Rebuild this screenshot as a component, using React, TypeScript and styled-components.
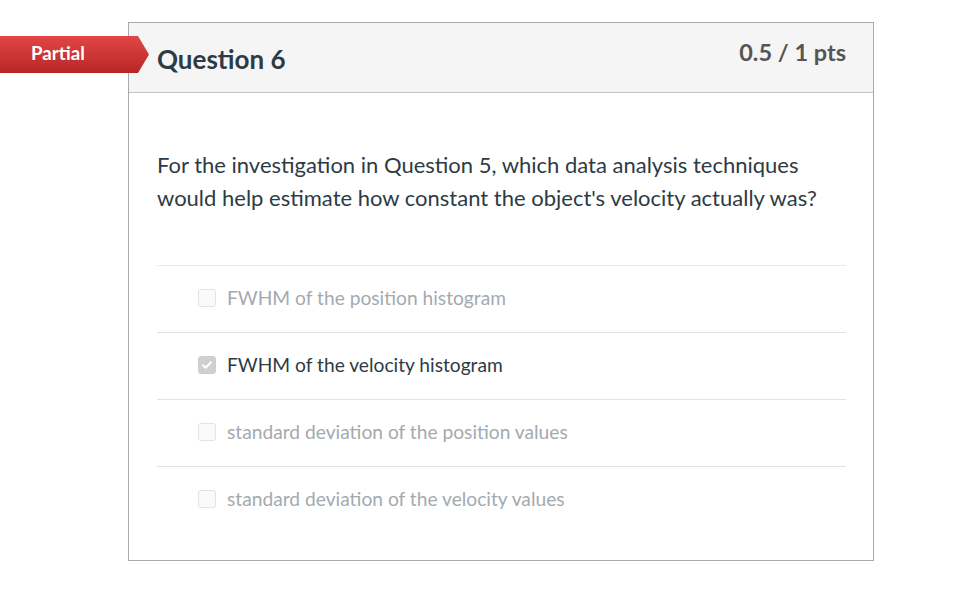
import React from "react";
import styled, { createGlobalStyle } from "styled-components";

const Global = createGlobalStyle`
  html, body { margin: 0; padding: 0; background: #fff; }
  body { font-family: Lato, "Open Sans", sans-serif; }
`;

const Page = styled.div`
  position: relative;
  padding: 22px 0 0 128px;
  width: 971px;
  height: 614px;
  box-sizing: border-box;
`;

const Badge = styled.div`
  position: absolute;
  left: 0;
  top: 36px;
  height: 37px;
  width: 149px;
  background: linear-gradient(#e24646, #b92626);
  clip-path: polygon(0 0, 138px 0, 149px 50%, 138px 100%, 0 100%);
  color: #fff;
  font-weight: 700;
  font-size: 18.7px;
  box-sizing: border-box;
  padding-left: 31px;
  display: flex;
  align-items: center;
  padding-bottom: 3px;
`;

const Card = styled.div`
  width: 746px;
  height: 539px;
  box-sizing: border-box;
  border: 1px solid #aaaaaa;
  display: flex;
  flex-direction: column;
`;

const Header = styled.div`
  height: 70px;
  box-sizing: border-box;
  background: #f5f5f5;
  border-bottom: 1px solid #c4c4c4;
  display: flex;
  justify-content: space-between;
  padding: 0 27px 0 28px;
`;

const Title = styled.h2`
  margin: 0;
  font-size: 26px;
  font-weight: 700;
  color: #2d3b45;
  padding-top: 19px;
  line-height: 34px;
`;

const Points = styled.div`
  font-size: 23.5px;
  font-weight: 700;
  color: #555;
  padding-top: 13px;
  line-height: 32px;
`;

const Body = styled.div`
  padding: 0 27px 0 28px;
`;

const QuestionText = styled.p`
  margin: 0;
  padding: 55px 0 51px;
  font-size: 22px;
  line-height: 33px;
  color: #2d3b45;
`;

const Answers = styled.div`
  display: flex;
  flex-direction: column;
`;

const Answer = styled.div<{ $first?: boolean }>`
  height: 67px;
  box-sizing: border-box;
  border-top: ${(p) => (p.$first ? "1px solid #ebebeb" : "1px solid #e2e2e2")};
  display: flex;
  align-items: center;
  padding: 0 0 3px 41px;
  gap: 11px;
`;

const Box = styled.span<{ $checked?: boolean }>`
  width: 18px;
  height: 18px;
  box-sizing: border-box;
  border-radius: 3px;
  border: 1px solid ${(p) => (p.$checked ? "#cdcdcd" : "#e3e3e3")};
  background: ${(p) => (p.$checked ? "#d0d0d0" : "#fafafa")};
  display: flex;
  align-items: center;
  justify-content: center;
  flex-shrink: 0;
`;

const Label = styled.span<{ $checked?: boolean }>`
  font-size: 19.2px;
  color: ${(p) => (p.$checked ? "#2d3b45" : "#a3aaaf")};
`;

const answers = [
  { text: "FWHM of the position histogram", checked: false },
  { text: "FWHM of the velocity histogram", checked: true },
  { text: "standard deviation of the position values", checked: false },
  { text: "standard deviation of the velocity values", checked: false },
];

export default function App() {
  return (
    <>
      <Global />
      <Page>
        <Badge>Partial</Badge>
        <Card>
          <Header>
            <Title>Question 6</Title>
            <Points>0.5 / 1 pts</Points>
          </Header>
          <Body>
            <QuestionText>
              For the investigation in Question 5, which data analysis techniques
              <br />
              would help estimate how constant the object's velocity actually was?
            </QuestionText>
            <Answers>
              {answers.map((a, i) => (
                <Answer key={i} $first={i === 0}>
                  <Box $checked={a.checked}>
                    {a.checked && (
                      <svg width="12" height="10" viewBox="0 0 12 10">
                        <path d="M2 5.3 L4.7 7.8 L10 2.2" fill="none" stroke="#fff" strokeWidth="2" strokeLinecap="round" strokeLinejoin="round" />
                      </svg>
                    )}
                  </Box>
                  <Label $checked={a.checked}>{a.text}</Label>
                </Answer>
              ))}
            </Answers>
          </Body>
        </Card>
      </Page>
    </>
  );
}
